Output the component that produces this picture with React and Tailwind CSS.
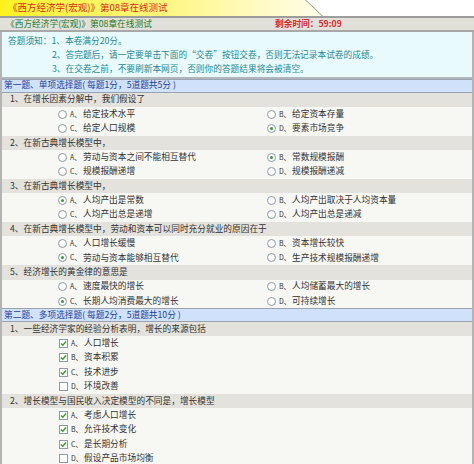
import React from "react";

const F = { fontFamily: '"Noto Sans CJK SC", "Noto Sans", sans-serif' };

function Radio({ checked }) {
  return (
    <span className="relative inline-flex h-[9px] w-[9px] shrink-0 items-center justify-center rounded-full border border-[#8a9aa8] bg-white">
      {checked && <span className="h-[3px] w-[3px] rounded-full bg-[#2e9c2e]" />}
    </span>
  );
}

function Check({ checked }) {
  return (
    <span className="inline-flex h-[9px] w-[9px] shrink-0 items-center justify-center border border-[#8a9aa8] bg-white">
      {checked && (
        <svg width="7" height="7" viewBox="0 0 7 7">
          <path d="M1 3.5 L2.8 5.3 L6 1.5" fill="none" stroke="#2e9c2e" strokeWidth="1.4" />
        </svg>
      )}
    </span>
  );
}

function Opt({ letter, text, checked, multi }) {
  return (
    <div className="flex items-center">
      {multi ? <Check checked={checked} /> : <Radio checked={checked} />}
      <span className="ml-[3px] w-[13px] text-[7px]">{letter}、</span>
      <span>{text}</span>
    </div>
  );
}

const single = [
  {
    q: "1、在增长因素分解中，我们假设了",
    o: ["给定技术水平", "给定资本存量", "给定人口规模", "要素市场竞争"],
    a: 3,
  },
  {
    q: "2、在新古典增长模型中，",
    o: ["劳动与资本之间不能相互替代", "常数规模报酬", "规模报酬递增", "规模报酬递减"],
    a: 1,
  },
  {
    q: "3、在新古典增长模型中，",
    o: ["人均产出是常数", "人均产出取决于人均资本量", "人均产出总是递增", "人均产出总是递减"],
    a: 0,
  },
  {
    q: "4、在新古典增长模型中，劳动和资本可以同时充分就业的原因在于",
    o: ["人口增长缓慢", "资本增长较快", "劳动与资本能够相互替代", "生产技术规模报酬递增"],
    a: 2,
  },
  {
    q: "5、经济增长的黄金律的意思是",
    o: ["速度最快的增长", "人均储蓄最大的增长", "长期人均消费最大的增长", "可持续增长"],
    a: 2,
  },
];

const multi = [
  {
    q: "1、一些经济学家的经验分析表明，增长的来源包括",
    o: ["人口增长", "资本积累", "技术进步", "环境改善"],
    a: [0, 1, 2],
  },
  {
    q: "2、增长模型与国民收入决定模型的不同是，增长模型",
    o: ["考虑人口增长", "允许技术变化", "是长期分析", "假设产品市场均衡"],
    a: [0, 1, 2],
  },
];

const L = ["A", "B", "C", "D"];

function QRow({ children }) {
  return (
    <div className="flex h-[14.4px] items-center bg-[#e3e2dc] pl-[8px] text-[#333]">{children}</div>
  );
}

function SecHead({ children }) {
  return (
    <div className="flex h-[13.5px] items-center border-y border-[#9aa3b2] bg-[#cfe1fb] pl-[2px] text-[#1d3f9c]">
      {children}
    </div>
  );
}

export default function App() {
  return (
    <div className="h-[464px] w-[474px] overflow-hidden bg-white text-[8.7px] leading-none" style={F}>
      {/* title */}
      <div className="relative h-[16px] bg-white">
        <div className="absolute left-0 top-0 h-[16px] w-[323px] bg-[#8c8c6a] [clip-path:polygon(0_0,306px_0,323px_100%,0_100%)]" />
        <div className="absolute left-0 top-0 h-[16px] w-[322px] bg-gradient-to-r from-[#fff21a] via-[#fff67a] to-[#fffdeb] [clip-path:polygon(0_0,305px_0,322px_100%,0_100%)]" />
        <div className="relative flex h-full items-center pl-[8px] text-[9.5px] text-[#e3261b]">
          《西方经济学(宏观)》第08章在线测试
        </div>
      </div>
      {/* sub bar */}
      <div className="flex h-[16px] items-center border-y-2 border-t-[#9c9c9c] border-b-[#a8a8a8] bg-[#e2e0da]">
        <span className="w-[275px] pl-[6px] text-[#1f7a1f]">《西方经济学(宏观)》第08章在线测试</span>
        <span className="font-bold text-[#e02a2a]">剩余时间：59:09</span>
      </div>
      <div className="border-x-2 border-b border-[#b4b4b4]">
        {/* notes */}
        <div className="flex h-[47px] flex-col justify-center gap-[5px] border-b-2 border-[#b0b6bc] bg-[#e9fafc] pl-[6px] pt-[2px] text-[#1e8b97]">
          <div>答题须知：1、本卷满分20分。</div>
          <div className="pl-[44px]">2、答完题后，请一定要单击下面的“交卷”按钮交卷，否则无法记录本试卷的成绩。</div>
          <div className="pl-[44px]">3、在交卷之前，不要刷新本网页，否则你的答题结果将会被清空。</div>
        </div>
        <SecHead>第一题、单项选择题( 每题1分，5道题共5分 )</SecHead>
        {single.map((s, i) => (
          <div key={i}>
            <QRow>{s.q}</QRow>
            {[0, 2].map((k) => (
              <div key={k} className="grid h-[14.4px] grid-cols-[209px_1fr] items-center bg-[#f7f7f4] pl-[56px] text-[#333]">
                <Opt letter={L[k]} text={s.o[k]} checked={s.a === k} />
                <Opt letter={L[k + 1]} text={s.o[k + 1]} checked={s.a === k + 1} />
              </div>
            ))}
          </div>
        ))}
        <SecHead>第二题、多项选择题( 每题2分，5道题共10分 )</SecHead>
        {multi.map((s, i) => (
          <div key={i}>
            <QRow>{s.q}</QRow>
            {s.o.map((t, k) => (
              <div key={k} className="flex h-[14.4px] items-center bg-[#f7f7f4] pl-[57px] text-[#333]">
                <Opt letter={L[k]} text={t} checked={s.a.includes(k)} multi />
              </div>
            ))}
          </div>
        ))}
      </div>
    </div>
  );
}
